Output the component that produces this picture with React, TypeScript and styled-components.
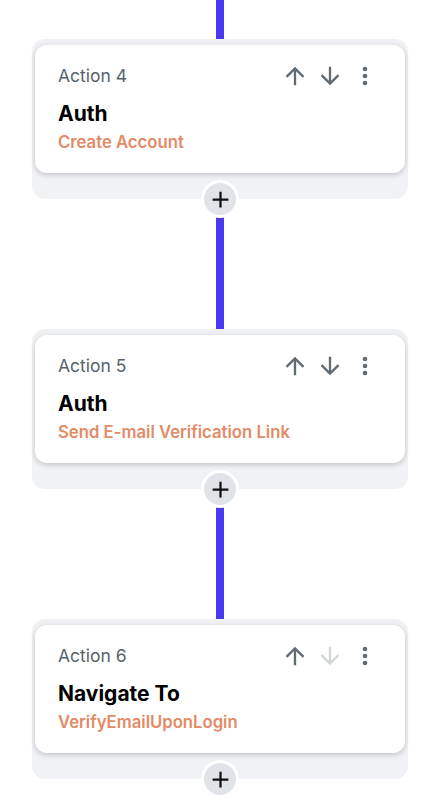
import React from "react";
import styled, { createGlobalStyle } from "styled-components";

const Global = createGlobalStyle`
  html, body { margin: 0; padding: 0; background: #ffffff; }
  body { font-family: Inter, "Noto Sans", sans-serif; }
`;

const Page = styled.div`
  width: 376px;
  padding: 0 0 29px 32px;
  display: flex;
  flex-direction: column;
  align-items: center;
`;

const Line = styled.div<{ $h: number }>`
  width: 8px;
  height: ${(p) => p.$h}px;
  background: #4b39ef;
  flex-shrink: 0;
`;

const Block = styled.div`
  position: relative;
  width: 376px;
  box-sizing: border-box;
  padding: 6px 3px 26px;
  background: #f1f2f6;
  border-radius: 13px;
`;

const Card = styled.div`
  background: #ffffff;
  border-radius: 12px;
  box-shadow: 0 2px 5px rgba(0, 0, 0, 0.16), 0 0 8px rgba(0, 0, 0, 0.05);
  padding: 17px 26px 21px 23px;
  display: flex;
  flex-direction: column;
`;

const Header = styled.div`
  display: flex;
  align-items: center;
  justify-content: space-between;
  height: 28px;
`;

const Label = styled.span`
  font-size: 17.5px;
  line-height: 28px;
  color: #57636c;
  font-weight: 400;
`;

const Tools = styled.div`
  display: flex;
  align-items: center;
  gap: 7px;
`;

const IconBtn = styled.span<{ $disabled?: boolean }>`
  width: 28px;
  height: 28px;
  display: flex;
  color: ${(p) => (p.$disabled ? "#d4d7da" : "#616b73")};
  svg { width: 28px; height: 28px; display: block; }
`;

const Title = styled.div`
  margin-top: 10px;
  font-size: 21px;
  line-height: 28px;
  font-weight: 700;
  color: #000000;
`;

const Sub = styled.div`
  margin-top: 4px;
  font-size: 16.7px;
  line-height: 20px;
  font-weight: 600;
  color: #e38a66;
`;

const AddButton = styled.div`
  position: absolute;
  left: 50%;
  bottom: 0;
  transform: translate(-50%, 50%);
  width: 32px;
  height: 32px;
  border-radius: 50%;
  background: #e0e3e7;
  border: 3px solid #ffffff;
  display: flex;
  align-items: center;
  justify-content: center;
  color: #111111;
  z-index: 2;
  svg { width: 27px; height: 27px; display: block; }
`;

const UpIcon = () => (
  <svg viewBox="0 0 24 24" fill="currentColor">
    <path d="M4 12l1.41 1.41L11 7.83V20h2V7.83l5.58 5.59L20 12l-8-8-8 8z" />
  </svg>
);
const DownIcon = () => (
  <svg viewBox="0 0 24 24" fill="currentColor">
    <path d="M20 12l-1.41-1.41L13 16.17V4h-2v12.17l-5.58-5.59L4 12l8 8 8-8z" />
  </svg>
);
const MoreIcon = () => (
  <svg viewBox="0 0 24 24" fill="currentColor">
    <circle cx="12" cy="6" r="2" />
    <circle cx="12" cy="12" r="2" />
    <circle cx="12" cy="18" r="2" />
  </svg>
);
const PlusIcon = () => (
  <svg viewBox="0 0 24 24" fill="currentColor">
    <path d="M19 13h-6v6h-2v-6H5v-2h6V5h2v6h6v2z" />
  </svg>
);

type Action = { n: number; title: string; sub: string; last?: boolean };

const actions: Action[] = [
  { n: 4, title: "Auth", sub: "Create Account" },
  { n: 5, title: "Auth", sub: "Send E-mail Verification Link" },
  { n: 6, title: "Navigate To", sub: "VerifyEmailUponLogin", last: true },
];

const ActionBlock = ({ a }: { a: Action }) => (
  <Block>
    <Card>
      <Header>
        <Label>Action {a.n}</Label>
        <Tools>
          <IconBtn><UpIcon /></IconBtn>
          <IconBtn $disabled={a.last}><DownIcon /></IconBtn>
          <IconBtn><MoreIcon /></IconBtn>
        </Tools>
      </Header>
      <Title>{a.title}</Title>
      <Sub>{a.sub}</Sub>
    </Card>
    <AddButton><PlusIcon /></AddButton>
  </Block>
);

export default function App() {
  return (
    <>
      <Global />
      <Page>
        {actions.map((a, i) => (
          <React.Fragment key={a.n}>
            <Line $h={i === 0 ? 39 : 130} />
            <ActionBlock a={a} />
          </React.Fragment>
        ))}
      </Page>
    </>
  );
}
